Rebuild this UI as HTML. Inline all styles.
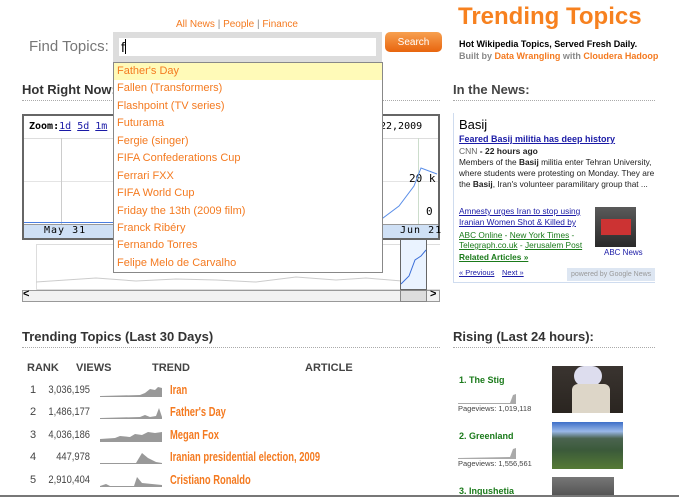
<!DOCTYPE html>
<html><head><meta charset="utf-8"><style>
*{margin:0;padding:0;box-sizing:border-box}
body{width:679px;height:497px;overflow:hidden;background:#fff;font-family:"Liberation Sans",Arial,sans-serif;position:relative}
.a{position:absolute;white-space:nowrap}
.or{color:#f47a20}
.h{font-weight:bold;font-size:13px;color:#333}
.dot{position:absolute;height:0;border-top:1px dotted #aaa}
.dd div{height:17.45px;line-height:17px;padding-left:3px;font-size:11px;color:#f47a20}
.hd{font-size:11px;font-weight:bold;color:#444}
.row{position:absolute;left:0;width:440px;height:20px;font-size:11px;color:#444}
.row .r{position:absolute;left:28px;width:10px;text-align:center}
.row .v{position:absolute;left:90px;transform:translateX(-100%) scaleX(0.85);transform-origin:right;text-align:right}
.row .t{position:absolute;left:100px;top:-3px}
.row .n{position:absolute;left:170px;font-size:12.5px;font-weight:bold;color:#f47a20;top:-1px;transform:scaleX(0.75);transform-origin:left}
.g{color:#1a7a1a}
.nl{color:#1a1aa6;text-decoration:underline}
</style></head><body>

<div class="a or" style="left:176px;top:19px;font-size:10px">All News <span style="color:#888">|</span> People <span style="color:#888">|</span> Finance</div>
<div class="a" style="left:29px;top:38px;font-size:15px;color:#777">Find Topics:</div>
<div class="a" style="left:113px;top:32px;width:269px;height:30px;background:#ddd"></div>
<div class="a" style="left:119px;top:38px;width:257px;height:18px;background:#fff;font-size:14px;line-height:18px;padding-left:2px">f<span style="display:inline-block;width:1px;height:15px;background:#000;vertical-align:-2px"></span></div>
<div class="a" style="left:385px;top:32px;width:57px;height:20px;border-radius:5px;background:linear-gradient(#f7a050,#e8650e);color:#fff;font-size:10px;text-align:center;line-height:22px">Search</div>

<div class="a h" style="left:22px;top:82px">Hot Right Now:</div>
<div class="dot" style="left:22px;top:100px;width:418px"></div>

<div class="a" style="left:22px;top:114px;width:418px;height:126px;border:2px solid #666;background:#fff">
 <div class="a" style="left:5px;top:5px;font-family:'DejaVu Sans Mono',monospace;font-size:10px;font-weight:bold">Zoom:<span style="color:#1a1aa6;text-decoration:underline;font-weight:normal">1d</span> <span style="color:#1a1aa6;text-decoration:underline;font-weight:normal">5d</span> <span style="color:#1a1aa6;text-decoration:underline;font-weight:normal">1m</span></div>
 <div class="a" style="left:356px;top:5px;font-family:'DejaVu Sans Mono',monospace;font-size:10px">22,2009</div>
 <div class="a" style="left:0;top:22px;width:414px;border-top:1px solid #ddd"></div>
 <div class="a" style="left:0;top:65px;width:414px;border-top:1px solid #e4e4e4"></div>
 <div class="a" style="left:37px;top:22px;height:86px;border-left:1px solid #ccc"></div>
 <div class="a" style="left:394px;top:22px;height:86px;border-left:1px solid #cdc"></div>
 <div class="a" style="left:0;top:106px;width:90px;border-top:1px solid #4a7ee0"></div>
 <div class="a" style="left:385px;top:56px;font-size:11px;font-family:'DejaVu Sans Mono',monospace">20 k</div>
 <div class="a" style="left:402px;top:89px;font-size:11px;font-family:'DejaVu Sans Mono',monospace">0</div>
 <svg class="a" style="left:355px;top:40px" width="60" height="70"><polyline points="0,65 20,50 35,30 42,12 58,18" fill="none" stroke="#5a8ee8" stroke-width="1"/></svg>
 <div class="a" style="left:0;top:108px;width:414px;height:14px;background:#cfe0f5;border-top:1px solid #999"></div>
 <div class="a" style="left:20px;top:109px;font-size:10px;font-family:'DejaVu Sans Mono',monospace;letter-spacing:1px">May 31</div>
 <div class="a" style="left:376px;top:109px;font-size:10px;font-family:'DejaVu Sans Mono',monospace;letter-spacing:1px">Jun 21</div>
</div>
<div class="a" style="left:36px;top:244px;width:404px;height:46px;border:1px solid #ddd;border-right:none"></div>
<svg class="a" style="left:36px;top:270px" width="366" height="20"><polyline points="0,12 30,10 60,8 100,11 140,9 180,10 220,12 260,7 300,10 330,8 366,11" fill="none" stroke="#ccc"/></svg>
<div class="a" style="left:400px;top:240px;width:27px;height:50px;background:#eaf3ff;border:1px solid #666;border-top:none"></div>
<svg class="a" style="left:401px;top:246px" width="26" height="44"><polyline points="0,38 8,30 14,14 20,10 25,4" fill="none" stroke="#3a6ed8"/></svg>
<div class="a" style="left:22px;top:290px;width:418px;height:12px;background:#f2f2f2;border:1px solid #999"></div>
<div class="a" style="left:23px;top:288px;font-size:11px;font-weight:bold">&lt;</div>
<div class="a" style="left:430px;top:288px;font-size:11px;font-weight:bold">&gt;</div>
<div class="a" style="left:400px;top:290px;width:27px;height:12px;background:#ddd;border:1px solid #888"></div>

<div class="a dd" style="left:113px;top:62px;width:270px;height:211px;background:#fff;border:1px solid #888">
<div style="background:#fffab8">Father's Day</div><div>Fallen (Transformers)</div><div>Flashpoint (TV series)</div><div>Futurama</div><div>Fergie (singer)</div><div>FIFA Confederations Cup</div><div>Ferrari FXX</div><div>FIFA World Cup</div><div>Friday the 13th (2009 film)</div><div>Franck Ribéry</div><div>Fernando Torres</div><div>Felipe Melo de Carvalho</div>
</div>

<div class="a or" style="left:458px;top:3px;font-size:24px;font-weight:bold;color:#f7811f">Trending Topics</div>
<div class="a" style="left:459px;top:39px;font-size:9px;font-weight:bold">Hot Wikipedia Topics, Served Fresh Daily.</div>
<div class="a" style="left:459px;top:51px;font-size:9px;font-weight:bold;color:#888">Built by <span class="or">Data Wrangling</span> with <span class="or">Cloudera Hadoop</span></div>

<div class="a h" style="left:453px;top:82px;color:#444">In the News:</div>
<div class="dot" style="left:453px;top:100px;width:202px"></div>
<div class="a" style="left:453px;top:113px;width:202px;height:170px;border-left:1px solid #cfdcef;border-bottom:1px solid #cfdcef"></div>
<div class="a" style="left:459px;top:117px;font-size:13px">Basij</div>
<div class="a nl" style="left:459px;top:134px;font-size:9px;font-weight:bold">Feared Basij militia has deep history</div>
<div class="a" style="left:459px;top:146px;font-size:8.5px;color:#666">CNN <b style="color:#222">- 22 hours ago</b></div>
<div class="a" style="left:459px;top:157px;font-size:8.3px;line-height:11px;color:#222">Members of the <b>Basij</b> militia enter Tehran University,<br>where students were protesting on Monday. They are<br>the <b>Basij</b>, Iran's volunteer paramilitary group that ...</div>
<div class="a nl" style="left:459px;top:206px;font-size:8.3px;line-height:11px">Amnesty urges Iran to stop using<br>Iranian Women Shot &amp; Killed by</div>
<div class="a g" style="left:459px;top:230px;font-size:8.3px;line-height:10px"><u>ABC Online</u> - <u>New York Times</u> -<br><u>Telegraph.co.uk</u> - <u>Jerusalem Post</u></div>
<div class="a g" style="left:459px;top:252px;font-size:8.3px;font-weight:bold"><u>Related Articles »</u></div>
<div class="a" style="left:595px;top:207px;width:41px;height:40px;background:linear-gradient(#5a5a5a,#2a2a2a)"><div style="position:absolute;left:6px;top:12px;width:30px;height:16px;background:#c33"></div></div>
<div class="a" style="left:604px;top:248px;font-size:8px;color:#1a1aa6">ABC News</div>
<div class="a nl" style="left:459px;top:268px;font-size:7.5px">« Previous</div>
<div class="a nl" style="left:502px;top:268px;font-size:7.5px">Next »</div>
<div class="a" style="left:567px;top:268px;width:88px;height:13px;background:#dde6f2;font-size:7px;color:#999;line-height:13px;padding-left:4px">powered by Google News</div>

<div class="a h" style="left:22px;top:329px">Trending Topics (Last 30 Days)</div>
<div class="dot" style="left:22px;top:347px;width:418px"></div>
<div class="a hd" style="left:27px;top:362px">RANK</div>
<div class="a hd" style="left:76px;top:362px">VIEWS</div>
<div class="a hd" style="left:152px;top:362px">TREND</div>
<div class="a hd" style="left:305px;top:362px">ARTICLE</div>

<div class="row" style="top:384px"><span class="r">1</span><span class="v">3,036,195</span><svg class="t" width="62" height="16"><path d="M0,15 L40,14 L45,12 L50,8 L55,9 L58,6 L62,7 L62,16 L0,16Z" fill="#999"/></svg><span class="n">Iran</span></div>
<div class="row" style="top:406px"><span class="r">2</span><span class="v">1,486,177</span><svg class="t" width="62" height="16"><path d="M0,15 L40,14 L45,12 L50,14 L56,13 L59,5 L62,14 L62,16 L0,16Z" fill="#999"/></svg><span class="n">Father's Day</span></div>
<div class="row" style="top:429px"><span class="r">3</span><span class="v">4,036,186</span><svg class="t" width="62" height="16"><path d="M0,13 L15,12 L20,10 L30,11 L35,8 L42,9 L48,6 L55,7 L62,6 L62,16 L0,16Z" fill="#999"/></svg><span class="n">Megan Fox</span></div>
<div class="row" style="top:451px"><span class="r">4</span><span class="v">447,978</span><svg class="t" width="62" height="16"><path d="M0,15 L36,15 L42,5 L48,10 L56,14 L62,15 L62,16 L0,16Z" fill="#999"/></svg><span class="n">Iranian presidential election, 2009</span></div>
<div class="row" style="top:474px"><span class="r">5</span><span class="v">2,910,404</span><svg class="t" width="62" height="16"><path d="M0,15 L6,13 L10,15 L34,15 L37,6 L42,12 L62,14 L62,16 L0,16Z" fill="#999"/></svg><span class="n">Cristiano Ronaldo</span></div>

<div class="a h" style="left:453px;top:329px">Rising (Last 24 hours):</div>
<div class="dot" style="left:453px;top:347px;width:202px"></div>
<div class="a g" style="left:459px;top:375px;font-size:9px;font-weight:bold">1. The Stig</div>
<svg class="a" style="left:458px;top:392px" width="58" height="12"><path d="M0,11 L52,11 L55,3 L58,2 L58,12 L0,12Z" fill="#aaa"/></svg>
<div class="a" style="left:458px;top:404px;font-size:7.5px;color:#444">Pageviews: 1,019,118</div>
<div class="a" style="left:552px;top:366px;width:71px;height:47px;background:linear-gradient(#3a3430,#2a2520)"><div style="position:absolute;left:22px;top:0;width:28px;height:20px;border-radius:10px;background:#dde"></div><div style="position:absolute;left:20px;top:18px;width:38px;height:29px;background:#ddd6c8;border-radius:6px 6px 0 0"></div></div>
<div class="a g" style="left:459px;top:431px;font-size:9px;font-weight:bold">2. Greenland</div>
<svg class="a" style="left:458px;top:447px" width="58" height="12"><path d="M0,11 L52,10 L55,2 L58,1 L58,12 L0,12Z" fill="#aaa"/></svg>
<div class="a" style="left:458px;top:459px;font-size:7.5px;color:#444">Pageviews: 1,556,561</div>
<div class="a" style="left:552px;top:422px;width:71px;height:47px;background:linear-gradient(#3d6fc8 0%,#9ab8e8 20%,#4b6450 35%,#3b5a3a 60%,#557a35 100%)"></div>
<div class="a g" style="left:459px;top:486px;font-size:9px;font-weight:bold">3. Ingushetia</div>
<div class="a" style="left:552px;top:477px;width:62px;height:18px;background:linear-gradient(#777,#555)"></div>
<div class="a" style="left:0;top:495px;width:679px;height:2px;background:#777"></div>
</body></html>
